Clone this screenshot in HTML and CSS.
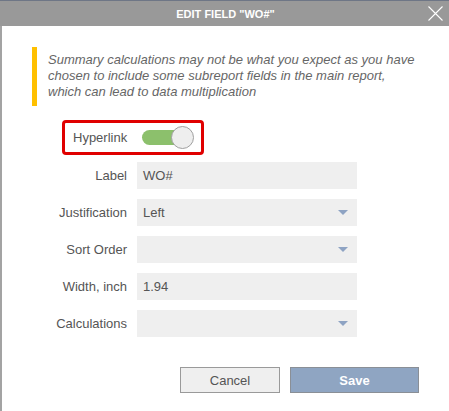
FILE: index.html
```html
<!DOCTYPE html>
<html>
<head>
<meta charset="utf-8">
<link rel="stylesheet" href="styles.css">
</head>
<body>
<div class="dialog">
  <div class="titlebar">
    <span class="title">EDIT FIELD "WO#"</span>
    <svg class="close" width="15" height="15" viewBox="0 0 15 15"><path d="M0.5 0.5 L14.5 14.5 M14.5 0.5 L0.5 14.5" stroke="#fff" stroke-width="1.1" fill="none"/></svg>
  </div>
  <div class="body">
    <div class="warning">Summary calculations may not be what you expect as you have chosen to include some subreport fields in the main report, which can lead to data multiplication</div>
    <div class="hyper">
      <span class="hlabel">Hyperlink</span>
      <span class="toggle"><span class="knob"></span></span>
    </div>
    <div class="form">
      <div class="row"><span class="label">Label</span><div class="input">WO#</div></div>
      <div class="row"><span class="label">Justification</span><div class="input select">Left<span class="arrow"></span></div></div>
      <div class="row"><span class="label">Sort Order</span><div class="input select"><span class="arrow"></span></div></div>
      <div class="row"><span class="label">Width, inch</span><div class="input">1.94</div></div>
      <div class="row"><span class="label">Calculations</span><div class="input select"><span class="arrow"></span></div></div>
    </div>
    <div class="buttons">
      <div class="btn cancel">Cancel</div>
      <div class="btn save">Save</div>
    </div>
  </div>
</div>
</body>
</html>
```
FILE: styles.css
```css
html, body {
  margin: 0;
  padding: 0;
  background: #fff;
}
body {
  width: 449px;
  height: 411px;
  overflow: hidden;
  font-family: "Liberation Sans", Arial, sans-serif;
}
.dialog {
  width: 449px;
  height: 411px;
  display: flex;
  flex-direction: column;
  box-sizing: border-box;
}
.titlebar {
  height: 26px;
  background: #999999;
  border-top: 1px solid #6e7686;
  box-sizing: border-box;
  display: flex;
  align-items: center;
  justify-content: center;
  position: relative;
}
.title {
  color: #fff;
  font-weight: bold;
  font-size: 11px;
  margin-left: 2px;
}
.close {
  position: absolute;
  right: 6px;
  top: 5px;
}
.body {
  flex: 1;
  border-left: 2px solid #a3a3a3;
  padding: 21px 30px 0 30px;
}
.warning {
  border-left: 5px solid #ffc000;
  padding: 5px 0 6px 11px;
  font-style: italic;
  font-size: 13px;
  line-height: 16px;
  color: #666;
}
.hyper {
  display: inline-flex;
  align-items: center;
  margin: 14px 0 0 30px;
  border: 3px solid #e00000;
  border-radius: 4px;
  padding: 3px 7px 3px 8px;
  gap: 15px;
}
.hlabel {
  font-size: 13px;
  color: #555;
  width: 54px;
  text-align: right;
}
.toggle {
  position: relative;
  display: block;
  width: 52px;
  height: 23px;
}
.toggle::before {
  content: "";
  position: absolute;
  left: 0;
  right: 2px;
  top: 4px;
  height: 15px;
  border-radius: 8px;
  background: #8cc06c;
}
.knob {
  position: absolute;
  right: 0;
  top: 0;
  width: 23px;
  height: 23px;
  box-sizing: border-box;
  border-radius: 50%;
  background: #eeeeee;
  border: 1px solid #a0a0a0;
}
.form {
  display: flex;
  flex-direction: column;
  gap: 10px;
  margin-top: 7px;
}
.row {
  display: flex;
  align-items: center;
  gap: 10px;
}
.label {
  width: 95px;
  text-align: right;
  font-size: 13px;
  color: #555;
}
.input {
  width: 220px;
  height: 27px;
  box-sizing: border-box;
  background: #efefef;
  padding-left: 6px;
  font-size: 13px;
  color: #555;
  display: flex;
  align-items: center;
  position: relative;
}
.arrow {
  position: absolute;
  right: 9px;
  top: 11px;
  width: 0;
  height: 0;
  border-left: 5px solid transparent;
  border-right: 5px solid transparent;
  border-top: 5px solid #8ea3c3;
}
.buttons {
  display: flex;
  justify-content: flex-end;
  gap: 10px;
  margin-top: 30px;
}
.btn {
  height: 26px;
  box-sizing: border-box;
  display: flex;
  align-items: center;
  justify-content: center;
  font-size: 13px;
}
.cancel {
  width: 100px;
  background: #efefef;
  border: 1px solid #9a9a9a;
  color: #555;
}
.save {
  width: 129px;
  background: #8fa5c2;
  border: 1px solid #8a8f96;
  color: #fff;
  font-weight: bold;
}
```
